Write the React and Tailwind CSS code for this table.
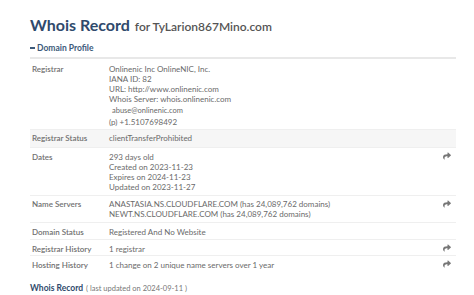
import { FaShare } from "react-icons/fa";

const ROWS = [
  {
    label: "Registrar",
    lines: [
      "Onlinenic Inc OnlineNIC, Inc.",
      "IANA ID: 82",
      "URL: http://www.onlinenic.com",
      "Whois Server: whois.onlinenic.com",
    ],
    extra: true,
    cls: "h-[71px] pt-[5px]",
  },
  { label: "Registrar Status", lines: ["clientTransferProhibited"], gray: true, cls: "h-[18px] pt-[3px]" },
  {
    label: "Dates",
    lines: ["293 days old", "Created on 2023-11-23", "Expires on 2024-11-23", "Updated on 2023-11-27"],
    share: true,
    cls: "h-[48px] pt-[4px]",
  },
  {
    label: "Name Servers",
    lines: [
      "ANASTASIA.NS.CLOUDFLARE.COM (has 24,089,762 domains)",
      "NEWT.NS.CLOUDFLARE.COM (has 24,089,762 domains)",
    ],
    share: true,
    cls: "h-[27px] pt-[3px]",
  },
  { label: "Domain Status", lines: ["Registered And No Website"], cls: "h-[17px] pt-[4px]" },
  { label: "Registrar History", lines: ["1 registrar"], share: true, cls: "h-[16px] pt-[4px]" },
  {
    label: "Hosting History",
    lines: ["1 change on 2 unique name servers over 1 year"],
    share: true,
    last: true,
    cls: "h-[22px] pt-[4px]",
  },
];

export default function App() {
  return (
    <div
      className="w-[474px] h-[295px] bg-white overflow-hidden px-[30px] pt-[15px]"
      style={{ fontFamily: "Lato, 'Open Sans', sans-serif" }}
    >
      {/* ===== Title ===== */}
      <h1 className="flex items-baseline gap-[5px] leading-[20px]">
        <span className="text-[16px] font-bold text-[#2f4a6c]">Whois Record</span>
        <span className="text-[12px] font-semibold text-[#555]">for TyLarion867Mino.com</span>
      </h1>

      <div className="mt-[5px] flex items-center text-[8.5px] font-bold text-[#3d5a7a] leading-[12px]">
        <span className="inline-block w-[5px] h-[1.5px] bg-[#3d5a7a]" />
        <span className="ml-[2px]">Domain Profile</span>
      </div>

      {/* ===== Table ===== */}
      <div className="mt-[3px] w-[426px] border-t-2 border-[#e8e8e8]">
        {ROWS.map((r) => (
          <div
            key={r.label}
            className={`relative flex ${r.cls} text-[8px] leading-[10px] ${
              r.last ? "" : "border-b border-[#efefef]"
            } ${r.gray ? "bg-[#f6f6f6]" : "bg-white"}`}
          >
            <div className="w-[79px] pl-[2px] font-semibold text-[#707070] shrink-0">{r.label}</div>
            <div className="text-[#6a6a6a]">
              {r.lines.map((l) => (
                <div key={l}>{l}</div>
              ))}
              {r.extra && (
                <>
                  <div className="pl-[3px] text-[7.5px] leading-[12px] mt-[1px]">abuse@onlinenic.com</div>
                  <div className="leading-[10px]">(p) +1.5107698492</div>
                </>
              )}
            </div>
            {r.share && (
              <FaShare className="absolute right-[5px] top-[4px] w-[8px] h-[8px] text-[#777]" />
            )}
          </div>
        ))}
      </div>

      {/* ===== Footer ===== */}
      <div className="mt-[4px] flex items-baseline gap-[3px] leading-[12px] pb-[1px] border-b-2 border-[#e8e8e8] w-[426px]">
        <span className="text-[8.5px] font-bold text-[#2f4a6c]">Whois Record</span>
        <span className="text-[7.5px] text-[#777]">( last updated on 2024-09-11 )</span>
      </div>
    </div>
  );
}
